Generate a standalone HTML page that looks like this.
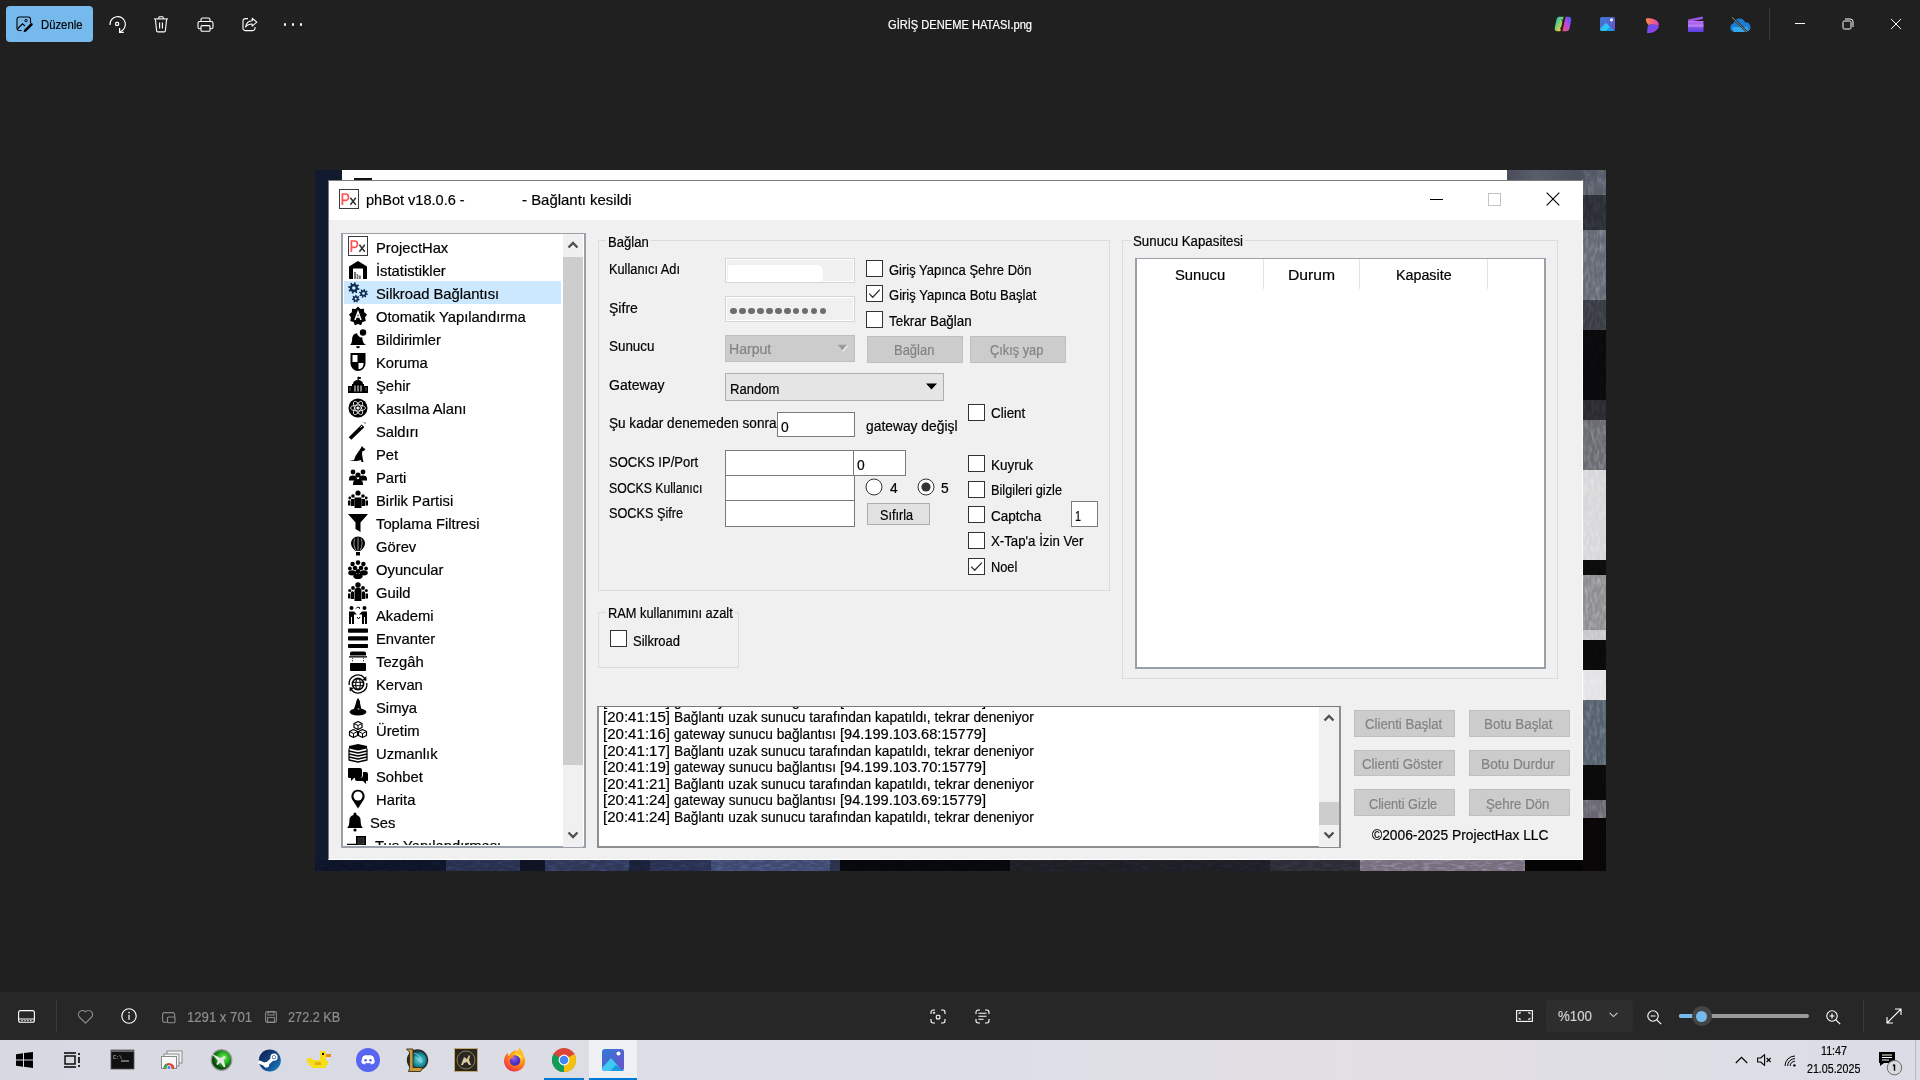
<!DOCTYPE html>
<html><head><meta charset="utf-8"><title>phBot</title>
<style>
html,body{margin:0;padding:0;}
body{width:1920px;height:1080px;position:relative;overflow:hidden;background:#202020;font-family:'Liberation Sans',sans-serif;}
.t{position:absolute;white-space:nowrap;line-height:1;-webkit-text-stroke:0.2px currentColor;}
.r{position:absolute;box-sizing:border-box;}
svg.r{overflow:visible;}
</style></head><body>

<div class="r" style="left:6px;top:6px;width:87px;height:36px;background:#76b9ed;border-radius:4px;"></div>
<svg class="r" style="left:16px;top:16px;" width="17" height="17" viewBox="0 0 17 17"><path d="M5.5 14.5H3.2A2.2 2.2 0 0 1 1 12.3V3.2A2.2 2.2 0 0 1 3.2 1h9.1a2.2 2.2 0 0 1 2.2 2.2V7" fill="none" stroke="#000" stroke-width="1.1"/><path d="M1.8 12.5L6.5 7.8 9 10" fill="none" stroke="#000" stroke-width="1.1"/><circle cx="10" cy="4.6" r="1.2" fill="none" stroke="#000" stroke-width="1"/><path d="M7.5 16.3l.7-2.6 6.3-6.3a1.3 1.3 0 0 1 1.9 1.9l-6.3 6.3z" fill="#000"/></svg>
<div class="t" style="left:40.6px;top:18px;font-size:13px;color:#000;transform:scaleX(0.8701);transform-origin:0 0;">Düzenle</div>
<svg class="r" style="left:109px;top:16px;" width="17" height="17" viewBox="0 0 17 17"><path d="M1 9A7.7 7.7 0 1 1 11.2 15.6" fill="none" stroke="#fff" stroke-width="1.2"/><path d="M10.6 12v4.3h4.2" fill="none" stroke="#fff" stroke-width="1.2"/><rect x="6.6" y="6.4" width="3" height="3" rx=".9" fill="none" stroke="#fff" stroke-width="1.2"/></svg>
<svg class="r" style="left:153px;top:16px;" width="16" height="17" viewBox="0 0 16 17"><path d="M1 2.9h14" stroke="#fff" stroke-width="1.1"/><path d="M5.8 2.8V1.6a.9.9 0 0 1 .9-.9h2.6a.9.9 0 0 1 .9.9v1.2" fill="none" stroke="#fff" stroke-width="1.1"/><path d="M2.4 3.2l1.2 11.6a1.2 1.2 0 0 0 1.2 1.1h6.4a1.2 1.2 0 0 0 1.2-1.1l1.2-11.6" fill="none" stroke="#fff" stroke-width="1.1"/><path d="M6.6 6.5v6M9.4 6.5v6" stroke="#fff" stroke-width="1.1"/></svg>
<svg class="r" style="left:197px;top:17px;" width="17" height="15" viewBox="0 0 17 15"><path d="M4 4.5V2.6A1.6 1.6 0 0 1 5.6 1h5.8A1.6 1.6 0 0 1 13 2.6v1.9" fill="none" stroke="#fff" stroke-width="1.1"/><path d="M4 11.8H2.6A1.6 1.6 0 0 1 1 10.2V6.2a1.7 1.7 0 0 1 1.7-1.7h11.6A1.7 1.7 0 0 1 16 6.2v4a1.6 1.6 0 0 1-1.6 1.6H13" fill="none" stroke="#fff" stroke-width="1.1"/><rect x="4" y="8.6" width="9" height="5.6" rx="1" fill="none" stroke="#fff" stroke-width="1.1"/></svg>
<svg class="r" style="left:242px;top:17px;" width="16" height="15" viewBox="0 0 16 15"><path d="M6 1.6H3.2A2.2 2.2 0 0 0 1 3.8v7.6a2.2 2.2 0 0 0 2.2 2.2h7.6a2.2 2.2 0 0 0 2.2-2.2V10" fill="none" stroke="#fff" stroke-width="1.1"/><path d="M10.2 1.2l4.6 4-4.6 4V7c-3 0-5 .8-6.6 3 .4-3.8 2.6-6 6.6-6.3z" fill="none" stroke="#fff" stroke-width="1.1" stroke-linejoin="round"/></svg>
<div class="r" style="left:283.7px;top:23.4px;width:2.6px;height:2.6px;background:#fff;border-radius:50%;"></div>
<div class="r" style="left:291.7px;top:23.4px;width:2.6px;height:2.6px;background:#fff;border-radius:50%;"></div>
<div class="r" style="left:299.7px;top:23.4px;width:2.6px;height:2.6px;background:#fff;border-radius:50%;"></div>
<div class="t" style="left:888.0px;top:18px;font-size:13px;color:#ffffff;transform:scaleX(0.8543);transform-origin:0 0;">GİRİŞ DENEME HATASI.png</div>
<svg class="r" style="left:1554px;top:16px;" width="18" height="16" viewBox="0 0 18 16"><defs><linearGradient id="cp1" x1="0" y1="0" x2="1" y2="1"><stop offset="0" stop-color="#1fa2f7"/><stop offset=".4" stop-color="#5fd47a"/><stop offset=".75" stop-color="#f2c438"/><stop offset="1" stop-color="#f46a3a"/></linearGradient><linearGradient id="cp2" x1="1" y1="0" x2="0" y2="1"><stop offset="0" stop-color="#2f5bea"/><stop offset=".45" stop-color="#b04ae6"/><stop offset="1" stop-color="#f4506a"/></linearGradient></defs><path d="M5 .8h4.6L6.4 15.2H3.2A2.6 2.6 0 0 1 .7 12L2.6 3A2.8 2.8 0 0 1 5 .8z" fill="url(#cp1)"/><path d="M11.6.8h3.2a2.6 2.6 0 0 1 2.5 3.2L15.4 13a2.8 2.8 0 0 1-2.4 2.2H8.4z" fill="url(#cp2)"/><path d="M7.5 3.5c2 0 1.5 3 1 5s-1 4-2.5 4" fill="none" stroke="#202020" stroke-width="1"/></svg>
<svg class="r" style="left:1600px;top:17px;" width="15" height="14" viewBox="0 0 15 14"><defs><linearGradient id="ph1" x1="0" y1="0" x2="1" y2="1"><stop offset="0" stop-color="#3b7bd8"/><stop offset="1" stop-color="#6b4fc8"/></linearGradient></defs><rect x="0" y="0" width="15" height="14" rx="2" fill="url(#ph1)"/><path d="M0 12L6 5.5l5 5.5v3H2a2 2 0 0 1-2-2z" fill="#2cc4f0"/><path d="M6 14l4-4.2 5 4.2z" fill="#1d9ae0"/><circle cx="11.5" cy="3" r="1.4" fill="#fff"/></svg>
<svg class="r" style="left:1645px;top:17px;" width="15" height="17" viewBox="0 0 15 17"><defs><linearGradient id="cl1" x1="0" y1="0" x2="1" y2="0"><stop offset="0" stop-color="#f98a3a"/><stop offset="1" stop-color="#e33cc8"/></linearGradient><linearGradient id="cl2" x1="0" y1="0" x2="1" y2="1"><stop offset="0" stop-color="#5b4ff0"/><stop offset="1" stop-color="#a640e8"/></linearGradient></defs><path d="M1 1.5C7 .5 14 3 14 8.5 11 8 7 7.2 3.5 8 1.5 6 .5 3.5 1 1.5z" fill="url(#cl1)"/><path d="M3.5 8c4-1 9 0 10.5 1-1 4.5-6 7.5-12 7 .5-3 0-5.5 1.5-8z" fill="url(#cl2)"/></svg>
<svg class="r" style="left:1687px;top:16px;" width="17" height="16" viewBox="0 0 17 16"><defs><linearGradient id="cc1" x1="0" y1="0" x2="0" y2="1"><stop offset="0" stop-color="#c070f0"/><stop offset="1" stop-color="#5a3de0"/></linearGradient></defs><path d="M1 3.5L15.5 0.5l.5 2.5L1.5 6z" fill="#9a55e8"/><rect x="1" y="5" width="15.5" height="11" fill="url(#cc1)"/><rect x="1" y="8.5" width="15.5" height="2.2" fill="#d89af5" opacity=".6"/></svg>
<svg class="r" style="left:1729px;top:17px;" width="22" height="16" viewBox="0 0 22 16"><path d="M5.5 15A4.5 4.5 0 0 1 4.6 6.2 6 6 0 0 1 16 5.2 4.6 4.6 0 0 1 17.2 15z" fill="#1a7fd4"/><path d="M5.5 15A4.5 4.5 0 0 1 4 10h14a3 3 0 0 1-.8 5z" fill="#35a8ee"/><path d="M3.5 0.5L18.5 15.5" stroke="#202020" stroke-width="2.2"/><path d="M3 .2L18 15.2" stroke="#9a9a9a" stroke-width="1"/></svg>
<div class="r" style="left:1769px;top:8px;width:1px;height:32px;background:#3a3a3a;"></div>
<div class="r" style="left:1795px;top:23px;width:10px;height:1px;background:#fff;"></div>
<svg class="r" style="left:1842px;top:18px;" width="12" height="12" viewBox="0 0 12 12"><rect x="1" y="3" width="8" height="8" rx="1.3" fill="none" stroke="#fff" stroke-width="1"/><path d="M3 1h5.5A2.5 2.5 0 0 1 11 3.5V9" fill="none" stroke="#fff" stroke-width="1"/></svg>
<svg class="r" style="left:1890px;top:18px;" width="12" height="12" viewBox="0 0 12 12"><path d="M1 1L11 11M11 1L1 11" stroke="#fff" stroke-width="1"/></svg>
<div class="r" style="left:315px;top:170px;width:1291px;height:701px;background:#121a2e;"></div>
<div class="r" style="left:342px;top:170px;width:1165px;height:11px;background:#ffffff;"></div>
<div class="r" style="left:354px;top:178px;width:18px;height:3px;background:#111;"></div>
<div class="r" style="left:1507px;top:170px;width:99px;height:11px;background:linear-gradient(90deg,#4a4e5c,#5a5e6a 30%,#4c505c 70%,#5a5e6a);"></div>
<div class="r" style="left:1583px;top:181px;width:23px;height:690px;background:linear-gradient(180deg,#5a5e68 0.0%,#5a5e68 2.0%,#2c2e36 2.0%,#2c2e36 7.1%,#666a74 7.1%,#666a74 17.2%,#3a3c44 17.2%,#3a3c44 21.6%,#0a0a0c 21.6%,#0a0a0c 31.7%,#2a2a30 31.7%,#2a2a30 34.6%,#6a6c72 34.6%,#6a6c72 41.9%,#d8d8da 41.9%,#d8d8da 54.9%,#0c0c0c 54.9%,#0c0c0c 57.1%,#8e8e92 57.1%,#8e8e92 65.1%,#c8c8ca 65.1%,#c8c8ca 66.5%,#0a0a0a 66.5%,#0a0a0a 70.9%,#e4e4e6 70.9%,#e4e4e6 75.2%,#58626e 75.2%,#58626e 84.6%,#0a0a0a 84.6%,#0a0a0a 89.7%,#686670 89.7%,#686670 92.3%,#080606 92.3%,#080606 100.0%);"></div>
<div class="r" style="left:315px;top:860px;width:1268px;height:11px;background:linear-gradient(90deg,#0e1428 0.0%,#0e1428 10.3%,#28304e 10.3%,#28304e 16.2%,#0e1222 16.2%,#0e1222 18.1%,#303858 18.1%,#303858 24.8%,#1a2038 24.8%,#1a2038 26.4%,#2a3050 26.4%,#2a3050 31.2%,#404a70 31.2%,#404a70 40.6%,#2a3048 40.6%,#2a3048 41.4%,#07080c 41.4%,#07080c 54.8%,#1e1e26 54.8%,#1e1e26 75.3%,#2c2c36 75.3%,#2c2c36 82.4%,#786f7e 82.4%,#786f7e 95.4%,#050404 95.4%,#050404 100.0%);"></div>
<svg class="r" style="left:1583px;top:170px;mix-blend-mode:overlay;" width="23" height="701" viewBox="0 0 23 701"><defs><filter id="fur" x="0" y="0" width="100%" height="100%"><feTurbulence type="fractalNoise" baseFrequency="0.35 0.12" numOctaves="2" seed="7"/><feColorMatrix type="matrix" values="0 0 0 0 0.5  0 0 0 0 0.5  0 0 0 0 0.5  0 0 0 2.2 -0.9"/></filter></defs><rect width="23" height="701" filter="url(#fur)" opacity=".7"/></svg>
<svg class="r" style="left:315px;top:860px;mix-blend-mode:overlay;" width="1268" height="11" viewBox="0 0 1268 11"><defs><filter id="fur2" x="0" y="0" width="100%" height="100%"><feTurbulence type="fractalNoise" baseFrequency="0.12 0.4" numOctaves="2" seed="3"/><feColorMatrix type="matrix" values="0 0 0 0 0.6  0 0 0 0 0.62  0 0 0 0 0.75  0 0 0 2.0 -0.9"/></filter></defs><rect width="1268" height="11" filter="url(#fur2)" opacity=".6"/></svg>
<div class="r" style="left:0px;top:992px;width:1920px;height:48px;background:#272727;"></div>
<svg class="r" style="left:18px;top:1010px;" width="17" height="13" viewBox="0 0 17 13"><rect x=".6" y=".6" width="15.8" height="11.6" rx="2" fill="none" stroke="#fff" stroke-width="1.1"/><path d="M.6 9h15.8" stroke="#fff" stroke-width="1"/><path d="M3.5 10.6h1.2M6.4 10.6h1.2M9.3 10.6h1.2M12.2 10.6h1.2" stroke="#fff" stroke-width="1.3"/></svg>
<div class="r" style="left:56px;top:1000px;width:1px;height:32px;background:#3a3a3a;"></div>
<svg class="r" style="left:77px;top:1009px;" width="17" height="15" viewBox="0 0 17 15"><path d="M8.5 14.2L2.3 8A3.8 3.8 0 0 1 8.5 3 3.8 3.8 0 0 1 14.7 8z" fill="none" stroke="#8e8e8e" stroke-width="1.1" stroke-linejoin="round"/></svg>
<svg class="r" style="left:121px;top:1008px;" width="16" height="16" viewBox="0 0 16 16"><circle cx="8" cy="8" r="7.2" fill="none" stroke="#fff" stroke-width="1.1"/><path d="M8 6.8v5" stroke="#fff" stroke-width="1.2"/><circle cx="8" cy="4.6" r=".8" fill="#fff"/></svg>
<svg class="r" style="left:162px;top:1012px;" width="14" height="11" viewBox="0 0 14 11"><rect x=".6" y=".6" width="12" height="9.6" rx="2" fill="none" stroke="#8a8a8a" stroke-width="1.1"/><rect x="5.5" y="5" width="7.5" height="5.8" rx="1" fill="#272727" stroke="#8a8a8a" stroke-width="1.1"/></svg>
<div class="t" style="left:186.7px;top:1010px;font-size:14px;color:#8d8d8d;transform:scaleX(0.9382);transform-origin:0 0;">1291 x 701</div>
<svg class="r" style="left:265px;top:1011px;" width="12" height="12" viewBox="0 0 12 12"><rect x=".6" y=".6" width="10.8" height="10.8" rx="1.6" fill="none" stroke="#8a8a8a" stroke-width="1.1"/><rect x="3" y="1" width="6" height="3" fill="none" stroke="#8a8a8a" stroke-width="1"/><rect x="2.6" y="6.6" width="6.8" height="4.6" fill="none" stroke="#8a8a8a" stroke-width="1"/></svg>
<div class="t" style="left:288.0px;top:1010px;font-size:14px;color:#8d8d8d;transform:scaleX(0.9080);transform-origin:0 0;">272.2 KB</div>
<svg class="r" style="left:930px;top:1009px;" width="16" height="15" viewBox="0 0 16 15"><path d="M1 5V3.2A2.2 2.2 0 0 1 3.2 1H5M11 1h1.8A2.2 2.2 0 0 1 15 3.2V5M15 10v1.8A2.2 2.2 0 0 1 12.8 14H11M5 14H3.2A2.2 2.2 0 0 1 1 11.8V10" fill="none" stroke="#fff" stroke-width="1.1"/><rect x="6.3" y="6.3" width="3.6" height="3.6" rx="1" fill="none" stroke="#fff" stroke-width="1.1"/><path d="M4 2.6v2.4M2.8 3.8h2.4" stroke="#fff" stroke-width=".9"/></svg>
<svg class="r" style="left:975px;top:1009px;" width="15" height="15" viewBox="0 0 15 15"><path d="M1 5V3.2A2.2 2.2 0 0 1 3.2 1H5M10 1h1.8A2.2 2.2 0 0 1 14 3.2V5M14 10v1.8A2.2 2.2 0 0 1 11.8 14H10M5 14H3.2A2.2 2.2 0 0 1 1 11.8V10" fill="none" stroke="#fff" stroke-width="1.1"/><path d="M3.5 4.3h8M3.5 7.3h8M3.5 10.3h5" stroke="#fff" stroke-width="1.1"/></svg>
<svg class="r" style="left:1516px;top:1010px;" width="17" height="12" viewBox="0 0 17 12"><rect x=".6" y=".6" width="15.8" height="10.8" fill="none" stroke="#fff" stroke-width="1.1"/><path d="M3 4.2V2.8h2M12 2.8h2v1.4M14 7.8v1.4h-2M5 9.2H3V7.8" fill="none" stroke="#fff" stroke-width="1"/></svg>
<div class="r" style="left:1546px;top:1000px;width:87px;height:32px;background:#2e2e2e;border-radius:4px;"></div>
<div class="t" style="left:1558.0px;top:1009px;font-size:14px;color:#d0d0d0;transform:scaleX(0.9495);transform-origin:0 0;">%100</div>
<svg class="r" style="left:1609px;top:1012px;" width="9" height="6" viewBox="0 0 9 6"><path d="M.6.8L4.5 4.6 8.4.8" fill="none" stroke="#d0d0d0" stroke-width="1.1"/></svg>
<svg class="r" style="left:1647px;top:1010px;" width="15" height="15" viewBox="0 0 15 15"><circle cx="6" cy="6" r="5.2" fill="none" stroke="#fff" stroke-width="1.1"/><path d="M3.5 6h5M9.8 9.8l4.4 4.4" stroke="#fff" stroke-width="1.2"/></svg>
<div class="r" style="left:1679px;top:1014px;width:130px;height:4px;background:#9b9b9b;border-radius:2px;"></div>
<div class="r" style="left:1679px;top:1014px;width:22px;height:4px;background:#76b9ed;border-radius:2px;"></div>
<div class="r" style="left:1691.5px;top:1006px;width:20px;height:20px;background:#454545;border-radius:50%;"></div>
<div class="r" style="left:1696px;top:1010.5px;width:11px;height:11px;background:#76b9ed;border-radius:50%;"></div>
<svg class="r" style="left:1826px;top:1010px;" width="15" height="15" viewBox="0 0 15 15"><circle cx="6" cy="6" r="5.2" fill="none" stroke="#fff" stroke-width="1.1"/><path d="M3.5 6h5M6 3.5v5M9.8 9.8l4.4 4.4" stroke="#fff" stroke-width="1.2"/></svg>
<div class="r" style="left:1863px;top:1000px;width:1px;height:32px;background:#3a3a3a;"></div>
<svg class="r" style="left:1886px;top:1008px;" width="16" height="16" viewBox="0 0 16 16"><path d="M1 15L15 1M9 1h6v6M1 9v6h6" fill="none" stroke="#fff" stroke-width="1.1"/></svg>
<div class="r" style="left:0px;top:1040px;width:1920px;height:40px;background:linear-gradient(90deg,#d6d8e2 0%,#dcdde5 30%,#dcdfe8 50%,#e3dfe3 70%,#dadde6 100%);"></div>
<svg class="r" style="left:16px;top:1052px;" width="17" height="16" viewBox="0 0 17 16"><path d="M0 2.2L7 1.2v6.3H0zM8 1.1L17 0v7.5H8zM0 8.5h7v6.3L0 13.8zM8 8.5h9V16l-9-1.2z" fill="#000"/></svg>
<svg class="r" style="left:63px;top:1052px;" width="18" height="16" viewBox="0 0 18 16"><rect x="2" y="4" width="10" height="8" fill="none" stroke="#000" stroke-width="1.4"/><path d="M1 1h12M1 15h12" stroke="#000" stroke-width="1.4"/><path d="M16 1v2M16 5v6M16 13v2" stroke="#000" stroke-width="1.6"/></svg>
<svg class="r" style="left:111px;top:1050px;" width="23" height="19" viewBox="0 0 23 19"><rect x="0" y="0" width="23" height="19" fill="#111"/><rect x="0" y="0" width="23" height="2" fill="#666"/><text x="2" y="9" font-size="5" fill="#ddd" font-family="Liberation Mono">C:\</text><path d="M10 11h8" stroke="#ccc" stroke-width="1"/><rect x="0" y="0" width="23" height="19" fill="none" stroke="#555" stroke-width=".8"/></svg>
<svg class="r" style="left:161px;top:1050px;" width="22" height="19" viewBox="0 0 22 19"><rect x="6" y="1" width="15" height="12" fill="#f4f4f4" stroke="#8a8a8a"/><rect x="3" y="4" width="15" height="12" fill="#f4f4f4" stroke="#8a8a8a"/><rect x=".5" y="6.5" width="15" height="12" fill="#f8f8f8" stroke="#8a8a8a"/><path d="M2.5 18.5a5.5 5.5 0 0 1 11 0z" fill="#e94235"/><path d="M2.5 18.5a5.5 5.5 0 0 1 3-4.9l2.5 4.9z" fill="#34a853"/><circle cx="8" cy="17.5" r="2" fill="#4285f4" stroke="#fff" stroke-width=".8"/></svg>
<svg class="r" style="left:210px;top:1049px;" width="23" height="22" viewBox="0 0 23 22"><defs><radialGradient id="xg" cx=".6" cy=".4"><stop offset="0" stop-color="#7df060"/><stop offset=".55" stop-color="#22b022"/><stop offset="1" stop-color="#0a4a0a"/></radialGradient></defs><circle cx="11.5" cy="11" r="10.3" fill="url(#xg)" stroke="#9a9a9a" stroke-width="1.2"/><path d="M1.5 4.5l9 4.5 4-2 1.5 1-2.5 3 2 6.5-1.5 1-3.5-5-3 2.5-1.2-.8 1.5-3.5z" fill="#e6e6e6"/></svg>
<svg class="r" style="left:258px;top:1049px;" width="23" height="23" viewBox="0 0 23 23"><defs><linearGradient id="stg" x1="0" y1="0" x2="1" y2="1"><stop offset="0" stop-color="#111a4a"/><stop offset=".6" stop-color="#14508e"/><stop offset="1" stop-color="#1a8ad0"/></linearGradient></defs><circle cx="11.8" cy="11.5" r="11" fill="url(#stg)"/><circle cx="16" cy="8.2" r="3.6" fill="#fff"/><circle cx="16" cy="8.2" r="2" fill="#1a3a70"/><circle cx="16" cy="8.2" r="1.4" fill="#fff"/><path d="M.5 12.8l7 3" stroke="#fff" stroke-width="3.4"/><path d="M8.5 15.5l6-5.5" stroke="#fff" stroke-width="3.4"/><circle cx="8.4" cy="15.8" r="2.8" fill="#fff"/></svg>
<svg class="r" style="left:306px;top:1050px;" width="25" height="20" viewBox="0 0 25 20"><path d="M14 1h6v3h3v3h-3v4h2v4h-2v3H6v-2H3v-3H1v-5h5v2h8z" fill="#f5de1a"/><rect x="16" y="3" width="2" height="2" fill="#000"/><rect x="20" y="4" width="5" height="3" fill="#f08a1a"/><rect x="9" y="12" width="6" height="3" fill="#e8b010"/></svg>
<svg class="r" style="left:356px;top:1048px;" width="24" height="24" viewBox="0 0 24 24"><circle cx="12" cy="12" r="12" fill="#5865f2"/><path d="M7 8.2c1.6-1 3-1.3 3-1.3l.3.6c1.1-.2 2.3-.2 3.4 0l.3-.6s1.4.3 3 1.3c1.2 2 1.8 4.2 1.6 6.6-1.3 1-2.5 1.5-3.5 1.7l-.8-1.3c.6-.2 1-.5 1.4-.8-2.3 1.1-4.9 1.1-7.3 0 .4.3.9.6 1.4.8l-.8 1.3c-1-.2-2.2-.7-3.5-1.7-.2-2.4.4-4.6 1.5-6.6z" fill="#fff"/><circle cx="9.6" cy="12.2" r="1.3" fill="#5865f2"/><circle cx="14.4" cy="12.2" r="1.3" fill="#5865f2"/></svg>
<svg class="r" style="left:405px;top:1048px;" width="23" height="24" viewBox="0 0 23 24"><defs><radialGradient id="lolg" cx=".6" cy=".5"><stop offset="0" stop-color="#6fd8e0"/><stop offset=".6" stop-color="#168a9a"/><stop offset="1" stop-color="#0a3040"/></radialGradient></defs><circle cx="12.5" cy="12" r="10" fill="url(#lolg)" stroke="#2a2a20" stroke-width="1.4"/><path d="M9 5c4 1 7 4 8 9M10 9c3 1 5 3 6 6" fill="none" stroke="#bff0f0" stroke-width=".8" opacity=".7"/><path d="M1.5 1h6.5v18.5h10l-2.5 4H3.5l1-3V4z" fill="#c89a40" stroke="#3a2a10" stroke-width=".9"/></svg>
<svg class="r" style="left:454px;top:1048px;" width="24" height="24" viewBox="0 0 24 24"><rect x=".5" y=".5" width="23" height="23" fill="#2a2620" stroke="#c0a870" stroke-width="1"/><circle cx="12" cy="12" r="9" fill="none" stroke="#a89060" stroke-width=".8"/><path d="M7 17l3-8 3 2 2-4 1 1-1 4 2 5h-2l-2-3-3 1-1 2z" fill="#d8c8a0"/></svg>
<svg class="r" style="left:503px;top:1048px;" width="23" height="24" viewBox="0 0 23 24"><defs><radialGradient id="ffg" cx=".7" cy=".25" r=".9"><stop offset="0" stop-color="#fff44f"/><stop offset=".35" stop-color="#ffa20a"/><stop offset=".7" stop-color="#ff5a2a"/><stop offset="1" stop-color="#e21a5c"/></radialGradient><radialGradient id="ffp" cx=".4" cy=".3"><stop offset="0" stop-color="#9a5cf5"/><stop offset="1" stop-color="#4a2fc0"/></radialGradient></defs><path d="M11.5 2.5a10.5 10.5 0 1 1-10 7.5c.8-2.5 2-4 3.5-5-.3 1.5 0 2.5 1 3.2C7.5 5.5 9 3.5 11.5 2.5z" fill="url(#ffg)"/><path d="M16 0c3 2 5 6 4.5 9L14 6z" fill="#ffbd2a"/><circle cx="12" cy="12.5" r="5.3" fill="url(#ffp)"/><path d="M5 8c2.5-.5 5 0 7 1.5-2.5 0-4 .8-5 2.3z" fill="#ff8a1a"/></svg>
<svg class="r" style="left:552px;top:1048px;" width="24" height="24" viewBox="0 0 24 24"><circle cx="12" cy="12" r="12" fill="#db4437"/><path d="M12 12L1.6 6A12 12 0 0 0 12 24z" fill="#0f9d58"/><path d="M12 12V24A12 12 0 0 0 22.4 6z" fill="#f4c20d"/><path d="M12 12h10.4A12 12 0 0 0 12 0z" fill="#db4437" opacity="0"/><circle cx="12" cy="12" r="5.4" fill="#fff"/><circle cx="12" cy="12" r="4.3" fill="#4285f4"/></svg>
<div class="r" style="left:544px;top:1078px;width:40px;height:2px;background:#0078d4;"></div>
<div class="r" style="left:589px;top:1040px;width:48px;height:40px;background:#eef0f4;"></div>
<div class="r" style="left:589px;top:1078px;width:48px;height:2px;background:#0078d4;"></div>
<svg class="r" style="left:602px;top:1049px;" width="22" height="22" viewBox="0 0 22 22"><defs><linearGradient id="pt1" x1="0" y1="0" x2="1" y2="1"><stop offset="0" stop-color="#2f7ad8"/><stop offset="1" stop-color="#7050c8"/></linearGradient></defs><rect x="0" y="0" width="22" height="22" rx="3" fill="url(#pt1)"/><path d="M0 19L9 9l8 9v4H3a3 3 0 0 1-3-3z" fill="#3ec8f2"/><path d="M8 22l6-6 8 6z" fill="#1a98e0"/><circle cx="16.5" cy="4.5" r="2" fill="#fff"/></svg>
<svg class="r" style="left:1735px;top:1056px;" width="13" height="8" viewBox="0 0 13 8"><path d="M.8 7L6.5 1.3 12.2 7" fill="none" stroke="#000" stroke-width="1.1"/></svg>
<svg class="r" style="left:1757px;top:1054px;" width="15" height="12" viewBox="0 0 15 12"><path d="M.6 4h3l4-3.4v10.8l-4-3.4h-3z" fill="none" stroke="#000" stroke-width="1.1" stroke-linejoin="round"/><path d="M9.6 4l4 4M13.6 4l-4 4" stroke="#000" stroke-width="1.1"/></svg>
<svg class="r" style="left:1784px;top:1055px;" width="13" height="12" viewBox="0 0 13 12"><path d="M1 11A10 10 0 0 1 11 1M3.6 11A7.4 7.4 0 0 1 11 3.6M6.2 11A4.8 4.8 0 0 1 11 6.2" fill="none" stroke="#000" stroke-width="1"/><circle cx="10.4" cy="10.4" r="1.2" fill="#000"/></svg>
<div class="t" style="left:1821.0px;top:1045px;font-size:12px;color:#000;transform:scaleX(0.8923);transform-origin:0 0;">11:47</div>
<div class="t" style="left:1807.3px;top:1063px;font-size:12px;color:#000;transform:scaleX(0.8875);transform-origin:0 0;">21.05.2025</div>
<svg class="r" style="left:1879px;top:1052px;" width="22" height="22" viewBox="0 0 22 22"><path d="M0 0h16v11H5l-4 3v-3H0z" fill="#000"/><path d="M3 3h10M3 5.5h10M3 8h7" stroke="#fff" stroke-width="1"/><circle cx="15.5" cy="15.7" r="7.2" fill="#d8dade" stroke="#6a6a6a" stroke-width="1"/><path d="M15.5 12.6v6.2M14 13.8l1.5-1.2" stroke="#000" stroke-width="1.4"/></svg>
<div class="r" style="left:1915px;top:1040px;width:1px;height:40px;background:#b8bac0;"></div>
<div class="r" style="left:328px;top:180px;width:1255px;height:680px;background:#f0f0f0;border:1px solid #7a7a7a;border-right-color:#fff;border-bottom-color:#fff;"></div>
<div class="r" style="left:329px;top:181px;width:1254px;height:39px;background:#ffffff;"></div>
<svg class="r" style="left:339px;top:189px;" width="20" height="20" viewBox="0 0 20 20"><rect x=".5" y=".5" width="19" height="19" fill="#fff" stroke="#3a3a3a" stroke-width="1"/><path d="M3.4 16V5h3.2a2.9 3.2 0 0 1 0 6.4H3.4" fill="none" stroke="#ff5050" stroke-width="1.7"/><path d="M11.4 8.8l5.4 7M16.8 8.8l-5.4 7" stroke="#333" stroke-width="1.5"/></svg>
<div class="t" style="left:366.3px;top:192px;font-size:15px;color:#000;transform:scaleX(0.9702);transform-origin:0 0;">phBot v18.0.6 -</div>
<div class="r" style="left:466px;top:192px;width:48px;height:18px;background:#fff;filter:blur(2px);"></div>
<div class="t" style="left:521.7px;top:192px;font-size:15px;color:#000;transform:scaleX(0.9959);transform-origin:0 0;">- Bağlantı kesildi</div>
<div class="r" style="left:1430px;top:199px;width:13px;height:1px;background:#000;"></div>
<div class="r" style="left:1488px;top:193px;width:13px;height:13px;border:1px solid #c4c4c4;"></div>
<svg class="r" style="left:1546px;top:192px;" width="14" height="14" viewBox="0 0 14 14"><path d="M.7.7L13.3 13.3M13.3.7L.7 13.3" stroke="#000" stroke-width="1.1"/></svg>
<div class="r" style="left:341px;top:233px;width:245px;height:615px;background:#fff;border:2px solid #9aa0a8;border-top-width:1.5px;"></div>
<div class="r" style="left:344px;top:281px;width:217px;height:23px;background:#cce8ff;"></div>
<div class="r" style="left:563px;top:234px;width:20px;height:613px;background:#f0f0f0;"></div>
<div class="r" style="left:563px;top:257px;width:20px;height:508px;background:#cdcdcd;"></div>
<svg class="r" style="left:567px;top:241px;" width="12" height="8" viewBox="0 0 12 8"><path d="M1.5 6.5L6 2l4.5 4.5" fill="none" stroke="#505050" stroke-width="2.4"/></svg>
<svg class="r" style="left:567px;top:831px;" width="12" height="8" viewBox="0 0 12 8"><path d="M1.5 1.5L6 6l4.5-4.5" fill="none" stroke="#505050" stroke-width="2.4"/></svg>
<div class="r" style="left:342px;top:234px;width:221px;height:611px;overflow:hidden;">
<div class="t" style="left:33.7px;top:6px;font-size:15px;color:#000;transform:scaleX(0.985);transform-origin:0 0;">ProjectHax</div>
<svg class="r" style="left:6px;top:2px" width="20" height="20" viewBox="0 0 20 20"><rect x=".5" y=".5" width="19" height="19" fill="#fff" stroke="#3a3a3a" stroke-width="1"/><path d="M3.4 16V5h3.2a2.9 3.2 0 0 1 0 6.4H3.4" fill="none" stroke="#ff5050" stroke-width="1.7"/><path d="M11.4 8.8l5.4 7M16.8 8.8l-5.4 7" stroke="#333" stroke-width="1.5"/></svg>
<div class="t" style="left:33.7px;top:29px;font-size:15px;color:#000;transform:scaleX(0.985);transform-origin:0 0;">İstatistikler</div>
<svg class="r" style="left:6px;top:26px" width="20" height="20" viewBox="0 0 20 20"><path d="M1 6.5L10 1l9 5.5V19h-4V8.5H5V19H1z" fill="#000"/><path d="M6 12h2v7H6zM8.6 14h1.6v5H8.6zM10.8 15.5h2v3.5h-2z" fill="#777"/></svg>
<div class="t" style="left:33.7px;top:52px;font-size:15px;color:#000;transform:scaleX(0.985);transform-origin:0 0;">Silkroad Bağlantısı</div>
<svg class="r" style="left:6px;top:49px" width="20" height="20" viewBox="0 0 20 20"><polygon points="9.90,5.00 11.47,5.54 11.10,7.10 9.45,6.86 8.70,7.90 9.43,9.39 8.06,10.23 7.07,8.90 5.80,9.10 5.26,10.67 3.70,10.30 3.94,8.65 2.90,7.90 1.41,8.63 0.57,7.26 1.90,6.27 1.70,5.00 0.13,4.46 0.50,2.90 2.15,3.14 2.90,2.10 2.17,0.61 3.54,-0.23 4.53,1.10 5.80,0.90 6.34,-0.67 7.90,-0.30 7.66,1.35 8.70,2.10 10.19,1.37 11.03,2.74 9.70,3.73" fill="#0e2f52"/><circle cx="5.8" cy="5" r="1.8" fill="#cce8ff"/><polygon points="18.70,10.40 19.98,10.82 19.68,12.06 18.35,11.85 17.76,12.66 18.37,13.87 17.29,14.53 16.49,13.44 15.50,13.60 15.08,14.88 13.84,14.58 14.05,13.25 13.24,12.66 12.03,13.27 11.37,12.19 12.46,11.39 12.30,10.40 11.02,9.98 11.32,8.74 12.65,8.95 13.24,8.14 12.63,6.93 13.71,6.27 14.51,7.36 15.50,7.20 15.92,5.92 17.16,6.22 16.95,7.55 17.76,8.14 18.97,7.53 19.63,8.61 18.54,9.41" fill="#0e2f52"/><circle cx="15.5" cy="10.4" r="1.4" fill="#cce8ff"/><polygon points="10.60,15.80 11.68,16.22 11.34,17.43 10.20,17.24 9.55,17.99 9.89,19.09 8.74,19.59 8.18,18.57 7.18,18.53 6.53,19.49 5.42,18.89 5.87,17.82 5.28,17.01 4.12,17.10 3.90,15.87 5.01,15.55 5.28,14.59 4.49,13.74 5.31,12.79 6.26,13.46 7.18,13.07 7.35,11.93 8.60,11.98 8.67,13.14 9.55,13.61 10.55,13.03 11.28,14.05 10.42,14.82" fill="#0e2f52"/><circle cx="7.8" cy="15.8" r="1.1" fill="#cce8ff"/></svg>
<div class="t" style="left:33.7px;top:75px;font-size:15px;color:#000;transform:scaleX(0.985);transform-origin:0 0;">Otomatik Yapılandırma</div>
<svg class="r" style="left:6px;top:72px" width="20" height="20" viewBox="0 0 20 20"><path d="M10 .5l2.4 2.6 3.5-.3.3 3.5L19 8.6 17 11.5l.8 3.4-3.4 1-1.3 3.3L10 18l-3.1 1.2-1.3-3.3-3.4-1 .8-3.4L1 8.6l2.8-2.3.3-3.5 3.5.3z" fill="#000"/><path d="M7 14l3-8 3 8M8.2 11h3.6" fill="none" stroke="#fff" stroke-width="1.5"/></svg>
<div class="t" style="left:33.7px;top:98px;font-size:15px;color:#000;transform:scaleX(0.985);transform-origin:0 0;">Bildirimler</div>
<svg class="r" style="left:6px;top:95px" width="20" height="20" viewBox="0 0 20 20"><path d="M2 16c2-1.5 2-4 2.2-7A5.5 5.5 0 0 1 9 4.2c.6 2.7 3 4.6 5.3 4.3.3 3 .5 5.8 3.7 7.5z" fill="#000"/><circle cx="15" cy="3.5" r="3.2" fill="#000"/><path d="M8 17.2a2 2 0 0 0 4 0z" fill="#000"/></svg>
<div class="t" style="left:33.7px;top:121px;font-size:15px;color:#000;transform:scaleX(0.985);transform-origin:0 0;">Koruma</div>
<svg class="r" style="left:6px;top:118px" width="20" height="20" viewBox="0 0 20 20"><path d="M2.5 1h15v10.5a7.5 7.5 0 0 1-15 0z" fill="#000"/><rect x="4.5" y="3" width="5" height="7" fill="#fff"/><path d="M10.5 11h5v1a5.5 5.5 0 0 1-5 5.2z" fill="#fff"/></svg>
<div class="t" style="left:33.7px;top:144px;font-size:15px;color:#000;transform:scaleX(0.985);transform-origin:0 0;">Şehir</div>
<svg class="r" style="left:6px;top:141px" width="20" height="20" viewBox="0 0 20 20"><path d="M10 2v3M10 2l3 1-3 1" stroke="#000" stroke-width="1" fill="#000"/><path d="M5 9a5 4 0 0 1 10 0z" fill="#000"/><rect x="4" y="9" width="12" height="9" fill="#000"/><rect x="0" y="11" width="4" height="7" fill="#000"/><rect x="16" y="11" width="4" height="7" fill="#000"/><path d="M7 10.5v6M10 10.5v6M13 10.5v6" stroke="#fff" stroke-width="1"/><path d="M1 13h2M1 15h2M17 13h2M17 15h2" stroke="#777" stroke-width=".8"/></svg>
<div class="t" style="left:33.7px;top:167px;font-size:15px;color:#000;transform:scaleX(0.985);transform-origin:0 0;">Kasılma Alanı</div>
<svg class="r" style="left:6px;top:164px" width="20" height="20" viewBox="0 0 20 20"><circle cx="10" cy="10" r="9.5" fill="#000"/><ellipse cx="10" cy="10" rx="7.5" ry="3" fill="none" stroke="#fff" stroke-width=".8"/><ellipse cx="10" cy="10" rx="7.5" ry="3" fill="none" stroke="#fff" stroke-width=".8" transform="rotate(60 10 10)"/><ellipse cx="10" cy="10" rx="7.5" ry="3" fill="none" stroke="#fff" stroke-width=".8" transform="rotate(-60 10 10)"/><circle cx="10" cy="10" r="1.6" fill="#fff"/></svg>
<div class="t" style="left:33.7px;top:190px;font-size:15px;color:#000;transform:scaleX(0.985);transform-origin:0 0;">Saldırı</div>
<svg class="r" style="left:6px;top:187px" width="20" height="20" viewBox="0 0 20 20"><path d="M2 17.5L15 4.8" stroke="#000" stroke-width="3.8"/><path d="M12.5 6.5L14 5" stroke="#fff" stroke-width="1"/><circle cx="17" cy="2" r=".8" fill="#555"/><circle cx="15" cy="1" r=".5" fill="#888"/></svg>
<div class="t" style="left:33.7px;top:213px;font-size:15px;color:#000;transform:scaleX(0.985);transform-origin:0 0;">Pet</div>
<svg class="r" style="left:6px;top:210px" width="20" height="20" viewBox="0 0 20 20"><path d="M14 2l1.5 2 2 1-1.5 2h-1.5l-.5 3 1 6 .5 2h-2l-.5-2-4 1H4L1.5 17l2-.5 2.5-.5 1.5-4 3-4.5 1.5-2z" fill="#000"/></svg>
<div class="t" style="left:33.7px;top:236px;font-size:15px;color:#000;transform:scaleX(0.985);transform-origin:0 0;">Parti</div>
<svg class="r" style="left:6px;top:233px" width="20" height="20" viewBox="0 0 20 20"><circle cx="5" cy="5" r="2.4" fill="#000"/><circle cx="15" cy="5" r="2.4" fill="#000"/><circle cx="10" cy="8" r="2.6" fill="#000"/><path d="M1 12a4 3.4 0 0 1 8 0v1.5H1zM11 12a4 3.4 0 0 1 8 0v1.5h-8z" fill="#000"/><path d="M5 16.5a5 4.5 0 0 1 10 0v1.5H5z" fill="#000"/></svg>
<div class="t" style="left:33.7px;top:259px;font-size:15px;color:#000;transform:scaleX(0.985);transform-origin:0 0;">Birlik Partisi</div>
<svg class="r" style="left:6px;top:256px" width="20" height="20" viewBox="0 0 20 20"><circle cx="10" cy="3" r="2.6" fill="#000"/><circle cx="5" cy="6" r="1.8" fill="#000"/><circle cx="15" cy="6" r="1.8" fill="#000"/><circle cx="1.8" cy="8" r="1.4" fill="#000"/><circle cx="18.2" cy="8" r="1.4" fill="#000"/><path d="M6.5 7.5h7V18h-7z" fill="#000"/><path d="M3 9h3.5v7H3zM13.5 9H17v7h-3.5zM0 10.5h2.5v5H0zM17.5 10.5H20v5h-2.5z" fill="#000"/></svg>
<div class="t" style="left:33.7px;top:282px;font-size:15px;color:#000;transform:scaleX(0.985);transform-origin:0 0;">Toplama Filtresi</div>
<svg class="r" style="left:6px;top:279px" width="20" height="20" viewBox="0 0 20 20"><path d="M0 1h20l-7.5 8.5V19l-5-3V9.5z" fill="#000"/></svg>
<div class="t" style="left:33.7px;top:305px;font-size:15px;color:#000;transform:scaleX(0.985);transform-origin:0 0;">Görev</div>
<svg class="r" style="left:6px;top:302px" width="20" height="20" viewBox="0 0 20 20"><path d="M10 .5a7 7 0 0 1 7 7c0 3-2.5 5.5-4.5 7.5h-5C5.5 13 3 10.5 3 7.5a7 7 0 0 1 7-7z" fill="#000"/><path d="M10 1.5v13M7 2.5c-1.5 3-1.5 8 1 12M13 2.5c1.5 3 1.5 8-1 12" stroke="#fff" stroke-width=".6" fill="none"/><rect x="8" y="16" width="4" height="3.5" fill="#000"/></svg>
<div class="t" style="left:33.7px;top:328px;font-size:15px;color:#000;transform:scaleX(0.985);transform-origin:0 0;">Oyuncular</div>
<svg class="r" style="left:6px;top:325px" width="20" height="20" viewBox="0 0 20 20"><g fill="#000"><circle cx="10" cy="3.6" r="2.3"/><circle cx="4.6" cy="5" r="2.2"/><circle cx="15.4" cy="5" r="2.2"/><circle cx="1.9" cy="9.5" r="1.9"/><circle cx="18.1" cy="9.5" r="1.9"/><circle cx="7" cy="9" r="2.3"/><circle cx="13" cy="9" r="2.3"/><circle cx="10" cy="12.5" r="2.4"/><ellipse cx="10" cy="17.2" rx="4.6" ry="2.8"/><ellipse cx="4.2" cy="13.8" rx="4" ry="2.6"/><ellipse cx="15.8" cy="13.8" rx="4" ry="2.6"/></g></svg>
<div class="t" style="left:33.7px;top:351px;font-size:15px;color:#000;transform:scaleX(0.985);transform-origin:0 0;">Guild</div>
<svg class="r" style="left:6px;top:348px" width="20" height="20" viewBox="0 0 20 20"><g fill="#000"><circle cx="10" cy="3" r="2.7"/><circle cx="5" cy="6" r="1.9"/><circle cx="15" cy="6" r="1.9"/><circle cx="1.7" cy="8.4" r="1.5"/><circle cx="18.3" cy="8.4" r="1.5"/><path d="M6.5 9a3.5 3.5 0 0 1 7 0v10h-7z"/><path d="M3 10a2 2 0 0 1 3 0v7H3zM14 10a2 2 0 0 1 3 0v7h-3zM0 11.5h2.5v5H0zM17.5 11.5H20v5h-2.5z"/></g></svg>
<div class="t" style="left:33.7px;top:374px;font-size:15px;color:#000;transform:scaleX(0.985);transform-origin:0 0;">Akademi</div>
<svg class="r" style="left:6px;top:371px" width="20" height="20" viewBox="0 0 20 20"><g fill="#000"><circle cx="3.5" cy="3" r="2"/><circle cx="16.5" cy="3" r="2"/><path d="M1 6.5h5l3 3H6V19H4v-7H3v7H1z"/><path d="M19 6.5h-5l-3 3h3V19h2v-7h1v7h2z"/><path d="M8 3.5a2.5 2.5 0 0 1 4-.5l-1 .5M9 12l1.5 2 1.5-2" stroke="#000" stroke-width="1" fill="none"/></g></svg>
<div class="t" style="left:33.7px;top:397px;font-size:15px;color:#000;transform:scaleX(0.985);transform-origin:0 0;">Envanter</div>
<svg class="r" style="left:6px;top:394px" width="20" height="20" viewBox="0 0 20 20"><rect x="0" y=".5" width="20" height="4.2" rx=".8" fill="#000"/><rect x="0" y="8.3" width="20" height="4.2" rx=".8" fill="#000"/><rect x="0" y="15.9" width="20" height="4.2" rx=".8" fill="#000"/></svg>
<div class="t" style="left:33.7px;top:420px;font-size:15px;color:#000;transform:scaleX(0.985);transform-origin:0 0;">Tezgâh</div>
<svg class="r" style="left:6px;top:417px" width="20" height="20" viewBox="0 0 20 20"><path d="M2 4.6V2.2A1.8 1.8 0 0 1 3.8 .4h12.4A1.8 1.8 0 0 1 18 2.2v2.4z" fill="#000"/><rect x="1" y="5.2" width="18" height="1.3" fill="#000"/><path d="M4.5 6.5v5M15.5 6.5v5" stroke="#555" stroke-width="1" stroke-dasharray="1.5 1"/><rect x="2" y="12" width="16" height="8" rx=".8" fill="#000"/></svg>
<div class="t" style="left:33.7px;top:443px;font-size:15px;color:#000;transform:scaleX(0.985);transform-origin:0 0;">Kervan</div>
<svg class="r" style="left:6px;top:440px" width="20" height="20" viewBox="0 0 20 20"><circle cx="10" cy="10" r="5.6" fill="#fff" stroke="#000" stroke-width="1.6"/><ellipse cx="10" cy="10" rx="2.3" ry="5.2" fill="none" stroke="#000" stroke-width="1.1"/><path d="M4.6 8.3h10.8M4.6 11.7h10.8" stroke="#000" stroke-width="1"/><path d="M1.2 11A8.8 8.8 0 0 1 16.5 4" fill="none" stroke="#000" stroke-width="1.3"/><path d="M18.8 9A8.8 8.8 0 0 1 3.5 16" fill="none" stroke="#000" stroke-width="1.3"/><path d="M18.2 2.2l.3 4.6-4.4-.6z" fill="#000"/><path d="M1.8 17.8l-.3-4.6 4.4.6z" fill="#000"/></svg>
<div class="t" style="left:33.7px;top:466px;font-size:15px;color:#000;transform:scaleX(0.985);transform-origin:0 0;">Simya</div>
<svg class="r" style="left:6px;top:463px" width="20" height="20" viewBox="0 0 20 20"><path d="M10 1c1 2 2.5 3 2 5l1.5 7H5.5l2.5-7c.3-2 1-4 2-5z" fill="#000"/><ellipse cx="10" cy="15" rx="8.5" ry="3.5" fill="#000"/><circle cx="10.5" cy="12" r="1" fill="#888"/></svg>
<div class="t" style="left:33.7px;top:489px;font-size:15px;color:#000;transform:scaleX(0.985);transform-origin:0 0;">Üretim</div>
<svg class="r" style="left:6px;top:486px" width="20" height="20" viewBox="0 0 20 20"><g fill="#fff" stroke="#000" stroke-width="1.2" stroke-linejoin="round"><path d="M10 1.5l4 2v4l-4 2-4-2v-4z"/><path d="M5.5 9.5l4 2v4l-4 2-4-2v-4z"/><path d="M14.5 9.5l4 2v4l-4 2-4-2v-4z"/></g><path d="M6 3.5l4 2 4-2M10 5.5v4M1.5 11.5l4 2 4-2M5.5 13.5v4M10.5 11.5l4 2 4-2M14.5 13.5v4" fill="none" stroke="#000" stroke-width="1"/></svg>
<div class="t" style="left:33.7px;top:512px;font-size:15px;color:#000;transform:scaleX(0.985);transform-origin:0 0;">Uzmanlık</div>
<svg class="r" style="left:6px;top:509px" width="20" height="20" viewBox="0 0 20 20"><path d="M1 3l9-2 9 2v2.5l-9 2-9-2z" fill="#000"/><path d="M1 8l9 2 9-2M1 11l9 2 9-2M1 14l9 2 9-2M1 17l9 2 9-2" fill="none" stroke="#000" stroke-width="1.6"/><path d="M1 5.5v12M19 5.5v12" stroke="#000" stroke-width="1.2"/></svg>
<div class="t" style="left:33.7px;top:535px;font-size:15px;color:#000;transform:scaleX(0.985);transform-origin:0 0;">Sohbet</div>
<svg class="r" style="left:6px;top:532px" width="20" height="20" viewBox="0 0 20 20"><path d="M1 2h11a2 2 0 0 1 2 2v6a2 2 0 0 1-2 2H6l-3 3v-3H1a1 1 0 0 1-1-1V3a1 1 0 0 1 1-1z" fill="#000"/><path d="M15 6h3a2 2 0 0 1 2 2v6a1 1 0 0 1-1 1h-1v3l-3-3H9a2 2 0 0 1-2-2v-1h5a3 3 0 0 0 3-3z" fill="#000"/></svg>
<div class="t" style="left:33.7px;top:558px;font-size:15px;color:#000;transform:scaleX(0.985);transform-origin:0 0;">Harita</div>
<svg class="r" style="left:6px;top:555px" width="20" height="20" viewBox="0 0 20 20"><path d="M10 19.5L4.2 10.5A6.6 6.6 0 1 1 15.8 10.5z" fill="#000"/><circle cx="10" cy="7" r="4.5" fill="#fff"/></svg>
<div class="t" style="left:27.8px;top:581px;font-size:15px;color:#000;transform:scaleX(0.985);transform-origin:0 0;">Ses</div>
<svg class="r" style="left:3px;top:578px" width="20" height="20" viewBox="0 0 20 20"><path d="M2 16c2-1.5 2.2-4 2.4-7.5A5.6 5.6 0 0 1 8.5 3V2a1.5 1.5 0 0 1 3 0v1a5.6 5.6 0 0 1 4.1 5.5c.2 3.5.4 6 2.4 7.5z" fill="#000"/><circle cx="10" cy="18" r="1.6" fill="#000"/></svg>
<div class="t" style="left:32.8px;top:604px;font-size:15px;color:#000;transform:scaleX(0.985);transform-origin:0 0;">Tus Yapılandırması</div>
<svg class="r" style="left:4px;top:601px" width="20" height="20" viewBox="0 0 20 20"><path d="M1 9.5h9" stroke="#000" stroke-width="1.5"/><rect x="10" y="1" width="10" height="10" fill="#000"/><rect x="12" y="3" width="6" height="6" fill="#222" stroke="#555" stroke-width=".6"/></svg>
</div>
<div class="r" style="left:598px;top:240px;width:512px;height:351px;border:1px solid #dcdcdc;"></div>
<div class="r" style="left:606.3px;top:237px;width:44.7px;height:6px;background:#f0f0f0;"></div>
<div class="t" style="left:608.3px;top:234.5px;font-size:14px;color:#000;transform:scaleX(0.9336);transform-origin:0 0;">Bağlan</div>
<div class="t" style="left:608.5px;top:262.4px;font-size:14px;color:#000;transform:scaleX(0.9123);transform-origin:0 0;">Kullanıcı Adı</div>
<div class="r" style="left:725px;top:258px;width:130px;height:25px;background:#f0f0f0;border:1px solid #d4d4d4;box-shadow:inset 0 0 0 1px #fff;"></div>
<div class="r" style="left:728px;top:265px;width:95px;height:16px;background:#fff;border-radius:2px 6px 2px 2px;"></div>
<div class="t" style="left:608.5px;top:300.6px;font-size:14px;color:#000;transform:scaleX(1.0039);transform-origin:0 0;">Şifre</div>
<div class="r" style="left:725px;top:296px;width:130px;height:26px;background:#f0f0f0;border:1px solid #d4d4d4;box-shadow:inset 0 0 0 1px #fff;"></div>
<div class="r" style="left:730.3px;top:308.0px;width:6.4px;height:6.4px;background:#6d6d6d;border-radius:50%;"></div>
<div class="r" style="left:739.27px;top:308.0px;width:6.4px;height:6.4px;background:#6d6d6d;border-radius:50%;"></div>
<div class="r" style="left:748.24px;top:308.0px;width:6.4px;height:6.4px;background:#6d6d6d;border-radius:50%;"></div>
<div class="r" style="left:757.2099999999999px;top:308.0px;width:6.4px;height:6.4px;background:#6d6d6d;border-radius:50%;"></div>
<div class="r" style="left:766.18px;top:308.0px;width:6.4px;height:6.4px;background:#6d6d6d;border-radius:50%;"></div>
<div class="r" style="left:775.15px;top:308.0px;width:6.4px;height:6.4px;background:#6d6d6d;border-radius:50%;"></div>
<div class="r" style="left:784.12px;top:308.0px;width:6.4px;height:6.4px;background:#6d6d6d;border-radius:50%;"></div>
<div class="r" style="left:793.0899999999999px;top:308.0px;width:6.4px;height:6.4px;background:#6d6d6d;border-radius:50%;"></div>
<div class="r" style="left:802.06px;top:308.0px;width:6.4px;height:6.4px;background:#6d6d6d;border-radius:50%;"></div>
<div class="r" style="left:811.03px;top:308.0px;width:6.4px;height:6.4px;background:#6d6d6d;border-radius:50%;"></div>
<div class="r" style="left:820.0px;top:308.0px;width:6.4px;height:6.4px;background:#6d6d6d;border-radius:50%;"></div>
<div class="t" style="left:608.5px;top:339.4px;font-size:14px;color:#000;transform:scaleX(0.9582);transform-origin:0 0;">Sunucu</div>
<div class="r" style="left:725px;top:335px;width:130px;height:27px;background:#cccccc;border:1px solid #bfbfbf;"></div>
<div class="t" style="left:729.3px;top:341.5px;font-size:14px;color:#838383;transform:scaleX(1.0043);transform-origin:0 0;">Harput</div>
<svg class="r" style="left:837px;top:344px;" width="12" height="8" viewBox="0 0 12 8"><path d="M.8 .8h9.4L5.5 6.6z" fill="#9c9c9c"/><path d="M10.3 1.6L5.8 7.2" stroke="#f8f8f8" stroke-width="1.3"/></svg>
<div class="t" style="left:608.5px;top:378px;font-size:14px;color:#000;transform:scaleX(1.0046);transform-origin:0 0;">Gateway</div>
<div class="r" style="left:725px;top:373px;width:219px;height:28px;background:#e5e5e5;border:1px solid #adadad;"></div>
<div class="t" style="left:729.5px;top:381.8px;font-size:14px;color:#000;transform:scaleX(0.9354);transform-origin:0 0;">Random</div>
<svg class="r" style="left:926px;top:383px;" width="11" height="7" viewBox="0 0 11 7"><path d="M0 .5h11L5.5 6.5z" fill="#000"/></svg>
<div class="t" style="left:608.5px;top:416px;font-size:14px;color:#000;transform:scaleX(0.9694);transform-origin:0 0;">Şu kadar denemeden sonra</div>
<div class="r" style="left:776.5px;top:412px;width:78px;height:25px;background:#fff;border:1px solid #7a7a7a;"></div>
<div class="t" style="left:780.5px;top:420px;font-size:14px;color:#000;transform:scaleX(0.9889);transform-origin:0 0;">0</div>
<div class="t" style="left:865.8px;top:419.2px;font-size:14px;color:#000;transform:scaleX(0.9880);transform-origin:0 0;">gateway değişl</div>
<div class="r" style="left:866px;top:260px;width:17px;height:17px;background:#fff;border:1px solid #333;"></div>
<div class="t" style="left:888.7px;top:262.6px;font-size:14px;color:#000;transform:scaleX(0.9280);transform-origin:0 0;">Giriş Yapınca Şehre Dön</div>
<div class="r" style="left:866px;top:285px;width:17px;height:17px;background:#fff;border:1px solid #333;"></div>
<svg class="r" style="left:866px;top:285px;" width="17" height="17" viewBox="0 0 17 17"><path d="M3.2 8.6l3.5 3.6 7.2-7.6" fill="none" stroke="#333" stroke-width="1.3"/></svg>
<div class="t" style="left:888.7px;top:288.1px;font-size:14px;color:#000;transform:scaleX(0.9309);transform-origin:0 0;">Giriş Yapınca Botu Başlat</div>
<div class="r" style="left:866px;top:311px;width:17px;height:17px;background:#fff;border:1px solid #333;"></div>
<div class="t" style="left:888.7px;top:313.6px;font-size:14px;color:#000;transform:scaleX(0.9574);transform-origin:0 0;">Tekrar Bağlan</div>
<div class="r" style="left:867px;top:336px;width:96px;height:27px;background:#cccccc;border:1px solid #bfbfbf;"></div>
<div class="t" style="left:893.6px;top:342.8px;font-size:14px;color:#838383;transform:scaleX(0.9268);transform-origin:0 0;">Bağlan</div>
<div class="r" style="left:970px;top:336px;width:96px;height:27px;background:#cccccc;border:1px solid #bfbfbf;"></div>
<div class="t" style="left:989.8px;top:342.8px;font-size:14px;color:#838383;transform:scaleX(0.9134);transform-origin:0 0;">Çıkış yap</div>
<div class="r" style="left:968px;top:404px;width:17px;height:17px;background:#fff;border:1px solid #333;"></div>
<div class="t" style="left:990.7px;top:406px;font-size:14px;color:#000;transform:scaleX(0.9583);transform-origin:0 0;">Client</div>
<div class="t" style="left:609.3px;top:455px;font-size:14px;color:#000;transform:scaleX(0.9321);transform-origin:0 0;">SOCKS IP/Port</div>
<div class="r" style="left:725px;top:450px;width:130px;height:26px;background:#fff;border:1px solid #7a7a7a;"></div>
<div class="r" style="left:853px;top:450px;width:53px;height:26px;background:#fff;border:1px solid #7a7a7a;"></div>
<div class="t" style="left:857.0px;top:458px;font-size:14px;color:#000;transform:scaleX(0.9889);transform-origin:0 0;">0</div>
<div class="t" style="left:609.3px;top:480.5px;font-size:14px;color:#000;transform:scaleX(0.8752);transform-origin:0 0;">SOCKS Kullanıcı</div>
<div class="r" style="left:725px;top:475px;width:130px;height:26px;background:#fff;border:1px solid #7a7a7a;"></div>
<div class="t" style="left:609.3px;top:506px;font-size:14px;color:#000;transform:scaleX(0.9059);transform-origin:0 0;">SOCKS Şifre</div>
<div class="r" style="left:725px;top:500px;width:130px;height:27px;background:#fff;border:1px solid #7a7a7a;"></div>
<svg class="r" style="left:865px;top:478px;" width="18" height="18" viewBox="0 0 18 18"><circle cx="9" cy="9" r="8" fill="#fff" stroke="#333" stroke-width="1"/></svg>
<div class="t" style="left:889.6px;top:480.5px;font-size:14px;color:#000;transform:scaleX(0.9889);transform-origin:0 0;">4</div>
<svg class="r" style="left:917px;top:478px;" width="18" height="18" viewBox="0 0 18 18"><circle cx="9" cy="9" r="8" fill="#fff" stroke="#333" stroke-width="1"/><circle cx="9" cy="9" r="4.6" fill="#333"/></svg>
<div class="t" style="left:940.6px;top:480.5px;font-size:14px;color:#000;transform:scaleX(0.9889);transform-origin:0 0;">5</div>
<div class="r" style="left:867px;top:503px;width:63px;height:22px;background:#e1e1e1;border:1px solid #adadad;"></div>
<div class="t" style="left:880.4px;top:508px;font-size:14px;color:#000;transform:scaleX(0.9052);transform-origin:0 0;">Sıfırla</div>
<div class="r" style="left:968px;top:455px;width:17px;height:17px;background:#fff;border:1px solid #333;"></div>
<div class="t" style="left:991.0px;top:457.5px;font-size:14px;color:#000;transform:scaleX(0.9639);transform-origin:0 0;">Kuyruk</div>
<div class="r" style="left:968px;top:481px;width:17px;height:17px;background:#fff;border:1px solid #333;"></div>
<div class="t" style="left:991.0px;top:483px;font-size:14px;color:#000;transform:scaleX(0.9125);transform-origin:0 0;">Bilgileri gizle</div>
<div class="r" style="left:968px;top:506px;width:17px;height:17px;background:#fff;border:1px solid #333;"></div>
<div class="t" style="left:991.0px;top:508.5px;font-size:14px;color:#000;transform:scaleX(0.9646);transform-origin:0 0;">Captcha</div>
<div class="r" style="left:1071px;top:501px;width:27px;height:26px;background:#fff;border:1px solid #7a7a7a;"></div>
<div class="t" style="left:1075.0px;top:509px;font-size:14px;color:#000;transform:scaleX(0.7706);transform-origin:0 0;">1</div>
<div class="r" style="left:968px;top:532px;width:17px;height:17px;background:#fff;border:1px solid #333;"></div>
<div class="t" style="left:991.0px;top:534px;font-size:14px;color:#000;transform:scaleX(0.9456);transform-origin:0 0;">X-Tap&#x27;a İzin Ver</div>
<div class="r" style="left:968px;top:558px;width:17px;height:17px;background:#fff;border:1px solid #333;"></div>
<svg class="r" style="left:968px;top:558px;" width="17" height="17" viewBox="0 0 17 17"><path d="M3.2 8.6l3.5 3.6 7.2-7.6" fill="none" stroke="#333" stroke-width="1.3"/></svg>
<div class="t" style="left:991.0px;top:559.5px;font-size:14px;color:#000;transform:scaleX(0.9134);transform-origin:0 0;">Noel</div>
<div class="r" style="left:598px;top:612px;width:141px;height:56px;border:1px solid #dcdcdc;"></div>
<div class="r" style="left:606px;top:609px;width:128.7px;height:6px;background:#f0f0f0;"></div>
<div class="t" style="left:608.0px;top:605.5px;font-size:14px;color:#000;transform:scaleX(0.9158);transform-origin:0 0;">RAM kullanımını azalt</div>
<div class="r" style="left:610px;top:630px;width:17px;height:17px;background:#fff;border:1px solid #333;"></div>
<div class="t" style="left:632.8px;top:633.7px;font-size:14px;color:#000;transform:scaleX(0.9273);transform-origin:0 0;">Silkroad</div>
<div class="r" style="left:1122px;top:240px;width:436px;height:439px;border:1px solid #dcdcdc;"></div>
<div class="r" style="left:1130.9px;top:237px;width:114px;height:6px;background:#f0f0f0;"></div>
<div class="t" style="left:1132.9px;top:234.1px;font-size:14px;color:#000;transform:scaleX(0.9486);transform-origin:0 0;">Sunucu Kapasitesi</div>
<div class="r" style="left:1135px;top:258px;width:411px;height:411px;background:#fff;border:2px solid #9aa0a8;border-top-width:1.5px;"></div>
<div class="r" style="left:1263px;top:259px;width:1px;height:30px;background:#e5e5e5;"></div>
<div class="r" style="left:1359px;top:259px;width:1px;height:30px;background:#e5e5e5;"></div>
<div class="r" style="left:1487px;top:259px;width:1px;height:30px;background:#e5e5e5;"></div>
<div class="t" style="left:1175.2px;top:268px;font-size:14px;color:#000;transform:scaleX(1.0572);transform-origin:0 0;">Sunucu</div>
<div class="t" style="left:1288.4px;top:268px;font-size:14px;color:#000;transform:scaleX(1.1212);transform-origin:0 0;">Durum</div>
<div class="t" style="left:1396.3px;top:268px;font-size:14px;color:#000;transform:scaleX(1.0205);transform-origin:0 0;">Kapasite</div>
<div class="r" style="left:597px;top:706px;width:744px;height:142px;background:#fff;border:2px solid #8e8e8e;border-top:1px solid #7a7a7a;"></div>
<div class="r" style="left:598px;top:707px;width:721px;height:140px;overflow:hidden;">
<div class="t" style="left:4.7px;top:-13.2px;font-size:14px;color:#000;transform:scaleX(1.0759);transform-origin:0 0;">[20:41:14]</div>
<div class="t" style="left:75.7px;top:-13.2px;font-size:14px;color:#000;transform:scaleX(0.9772);transform-origin:0 0;">gateway sunucu bağlantısı</div>
<div class="t" style="left:241.7px;top:-13.2px;font-size:14px;color:#000;transform:scaleX(1.0419);transform-origin:0 0;">[94.199.103.67:15779]</div>
<div class="t" style="left:4.7px;top:3.4px;font-size:14px;color:#000;transform:scaleX(1.0759);transform-origin:0 0;">[20:41:15]</div>
<div class="t" style="left:75.7px;top:3.4px;font-size:14px;color:#000;transform:scaleX(0.9815);transform-origin:0 0;">Bağlantı uzak sunucu tarafından kapatıldı, tekrar deneniyor</div>
<div class="t" style="left:4.7px;top:20.0px;font-size:14px;color:#000;transform:scaleX(1.0759);transform-origin:0 0;">[20:41:16]</div>
<div class="t" style="left:75.7px;top:20.0px;font-size:14px;color:#000;transform:scaleX(0.9772);transform-origin:0 0;">gateway sunucu bağlantısı</div>
<div class="t" style="left:241.7px;top:20.0px;font-size:14px;color:#000;transform:scaleX(1.0419);transform-origin:0 0;">[94.199.103.68:15779]</div>
<div class="t" style="left:4.7px;top:36.6px;font-size:14px;color:#000;transform:scaleX(1.0759);transform-origin:0 0;">[20:41:17]</div>
<div class="t" style="left:75.7px;top:36.6px;font-size:14px;color:#000;transform:scaleX(0.9815);transform-origin:0 0;">Bağlantı uzak sunucu tarafından kapatıldı, tekrar deneniyor</div>
<div class="t" style="left:4.7px;top:53.2px;font-size:14px;color:#000;transform:scaleX(1.0759);transform-origin:0 0;">[20:41:19]</div>
<div class="t" style="left:75.7px;top:53.2px;font-size:14px;color:#000;transform:scaleX(0.9772);transform-origin:0 0;">gateway sunucu bağlantısı</div>
<div class="t" style="left:241.7px;top:53.2px;font-size:14px;color:#000;transform:scaleX(1.0419);transform-origin:0 0;">[94.199.103.70:15779]</div>
<div class="t" style="left:4.7px;top:69.8px;font-size:14px;color:#000;transform:scaleX(1.0759);transform-origin:0 0;">[20:41:21]</div>
<div class="t" style="left:75.7px;top:69.8px;font-size:14px;color:#000;transform:scaleX(0.9815);transform-origin:0 0;">Bağlantı uzak sunucu tarafından kapatıldı, tekrar deneniyor</div>
<div class="t" style="left:4.7px;top:86.4px;font-size:14px;color:#000;transform:scaleX(1.0759);transform-origin:0 0;">[20:41:24]</div>
<div class="t" style="left:75.7px;top:86.4px;font-size:14px;color:#000;transform:scaleX(0.9772);transform-origin:0 0;">gateway sunucu bağlantısı</div>
<div class="t" style="left:241.7px;top:86.4px;font-size:14px;color:#000;transform:scaleX(1.0419);transform-origin:0 0;">[94.199.103.69:15779]</div>
<div class="t" style="left:4.7px;top:103.0px;font-size:14px;color:#000;transform:scaleX(1.0759);transform-origin:0 0;">[20:41:24]</div>
<div class="t" style="left:75.7px;top:103.0px;font-size:14px;color:#000;transform:scaleX(0.9815);transform-origin:0 0;">Bağlantı uzak sunucu tarafından kapatıldı, tekrar deneniyor</div>
</div>
<div class="r" style="left:1319px;top:707px;width:20px;height:140px;background:#f0f0f0;"></div>
<div class="r" style="left:1319px;top:802px;width:20px;height:23px;background:#cdcdcd;"></div>
<svg class="r" style="left:1323px;top:714px;" width="12" height="8" viewBox="0 0 12 8"><path d="M1.5 6.5L6 2l4.5 4.5" fill="none" stroke="#505050" stroke-width="2.4"/></svg>
<svg class="r" style="left:1323px;top:831px;" width="12" height="8" viewBox="0 0 12 8"><path d="M1.5 1.5L6 6l4.5-4.5" fill="none" stroke="#505050" stroke-width="2.4"/></svg>
<div class="r" style="left:1354px;top:710px;width:101px;height:27px;background:#cccccc;border:1px solid #bfbfbf;"></div>
<div class="t" style="left:1364.8px;top:717px;font-size:14px;color:#838383;transform:scaleX(0.9461);transform-origin:0 0;">Clienti Başlat</div>
<div class="r" style="left:1469px;top:710px;width:101px;height:27px;background:#cccccc;border:1px solid #bfbfbf;"></div>
<div class="t" style="left:1483.5px;top:717px;font-size:14px;color:#838383;transform:scaleX(0.9567);transform-origin:0 0;">Botu Başlat</div>
<div class="r" style="left:1354px;top:750px;width:101px;height:26px;background:#cccccc;border:1px solid #bfbfbf;"></div>
<div class="t" style="left:1362.4px;top:756.7px;font-size:14px;color:#838383;transform:scaleX(0.9504);transform-origin:0 0;">Clienti Göster</div>
<div class="r" style="left:1469px;top:750px;width:101px;height:26px;background:#cccccc;border:1px solid #bfbfbf;"></div>
<div class="t" style="left:1480.7px;top:756.7px;font-size:14px;color:#838383;transform:scaleX(0.9777);transform-origin:0 0;">Botu Durdur</div>
<div class="r" style="left:1354px;top:789px;width:101px;height:27px;background:#cccccc;border:1px solid #bfbfbf;"></div>
<div class="t" style="left:1368.9px;top:796.5px;font-size:14px;color:#838383;transform:scaleX(0.9118);transform-origin:0 0;">Clienti Gizle</div>
<div class="r" style="left:1469px;top:789px;width:101px;height:27px;background:#cccccc;border:1px solid #bfbfbf;"></div>
<div class="t" style="left:1486.0px;top:796.5px;font-size:14px;color:#838383;transform:scaleX(0.9487);transform-origin:0 0;">Şehre Dön</div>
<div class="t" style="left:1372.0px;top:828px;font-size:14px;color:#000;transform:scaleX(0.9849);transform-origin:0 0;">©2006-2025 ProjectHax LLC</div>
</body></html>
